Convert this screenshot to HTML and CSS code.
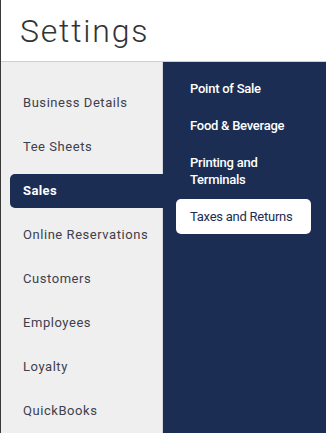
FILE: index.html
```html
<!DOCTYPE html>
<html>
<head>
<meta charset="utf-8">
<link rel="stylesheet" href="styles.css">
</head>
<body>
<div class="page">
  <header class="header"><h1 class="title">Settings</h1></header>
  <div class="main">
    <nav class="side">
      <div class="side-item">Business Details</div>
      <div class="side-item">Tee Sheets</div>
      <div class="side-item active">Sales</div>
      <div class="side-item">Online Reservations</div>
      <div class="side-item">Customers</div>
      <div class="side-item">Employees</div>
      <div class="side-item">Loyalty</div>
      <div class="side-item">QuickBooks</div>
    </nav>
    <div class="sub">
      <div class="sub-item">Point of Sale</div>
      <div class="sub-item">Food &amp; Beverage</div>
      <div class="sub-item">Printing and<br>Terminals</div>
      <div class="sub-item current">Taxes and Returns</div>
    </div>
  </div>
</div>
</body>
</html>
```
FILE: styles.css
```css
html, body {
  margin: 0;
  padding: 0;
  background: #fff;
}
body {
  font-family: Roboto, "Liberation Sans", sans-serif;
}
.page {
  width: 326px;
  height: 433px;
  box-sizing: border-box;
  border-left: 1px solid #3a3a3a;
  display: flex;
  flex-direction: column;
  overflow: hidden;
}
.header {
  height: 61px;
  border-bottom: 1px solid #cfcfcf;
  padding-left: 19px;
  flex: none;
}
.title {
  margin: 0;
  font-weight: 300;
  font-size: 32px;
  line-height: 62px;
  letter-spacing: 1.8px;
  color: #333;
}
.main {
  flex: 1;
  display: flex;
}
.side {
  width: 161px;
  background: #efefef;
  border-right: 1px solid #d6d6d6;
  padding-top: 24px;
  display: flex;
  flex-direction: column;
  gap: 10px;
}
.side-item {
  height: 34px;
  line-height: 34px;
  margin-left: 9px;
  padding-left: 13px;
  font-size: 13px;
  letter-spacing: 0.55px;
  color: #40404c;
}
.side-item.active {
  background: #1b2d53;
  color: #fff;
  font-weight: 700;
  margin-right: -1px;
  border-radius: 5px 0 0 5px;
  letter-spacing: 0.4px;
}
.sub {
  flex: 1;
  background: #1b2d53;
  padding-top: 9px;
  display: flex;
  flex-direction: column;
  gap: 2px;
}
.sub-item {
  margin: 0 15px 0 13px;
  padding: 9px 14px;
  line-height: 17px;
  font-size: 13px;
  font-weight: 500;
  letter-spacing: -0.25px;
  color: #fff;
}
.sub-item.current {
  background: #fff;
  color: #1b2d53;
  font-weight: 400;
  border-radius: 5px;
}
```
